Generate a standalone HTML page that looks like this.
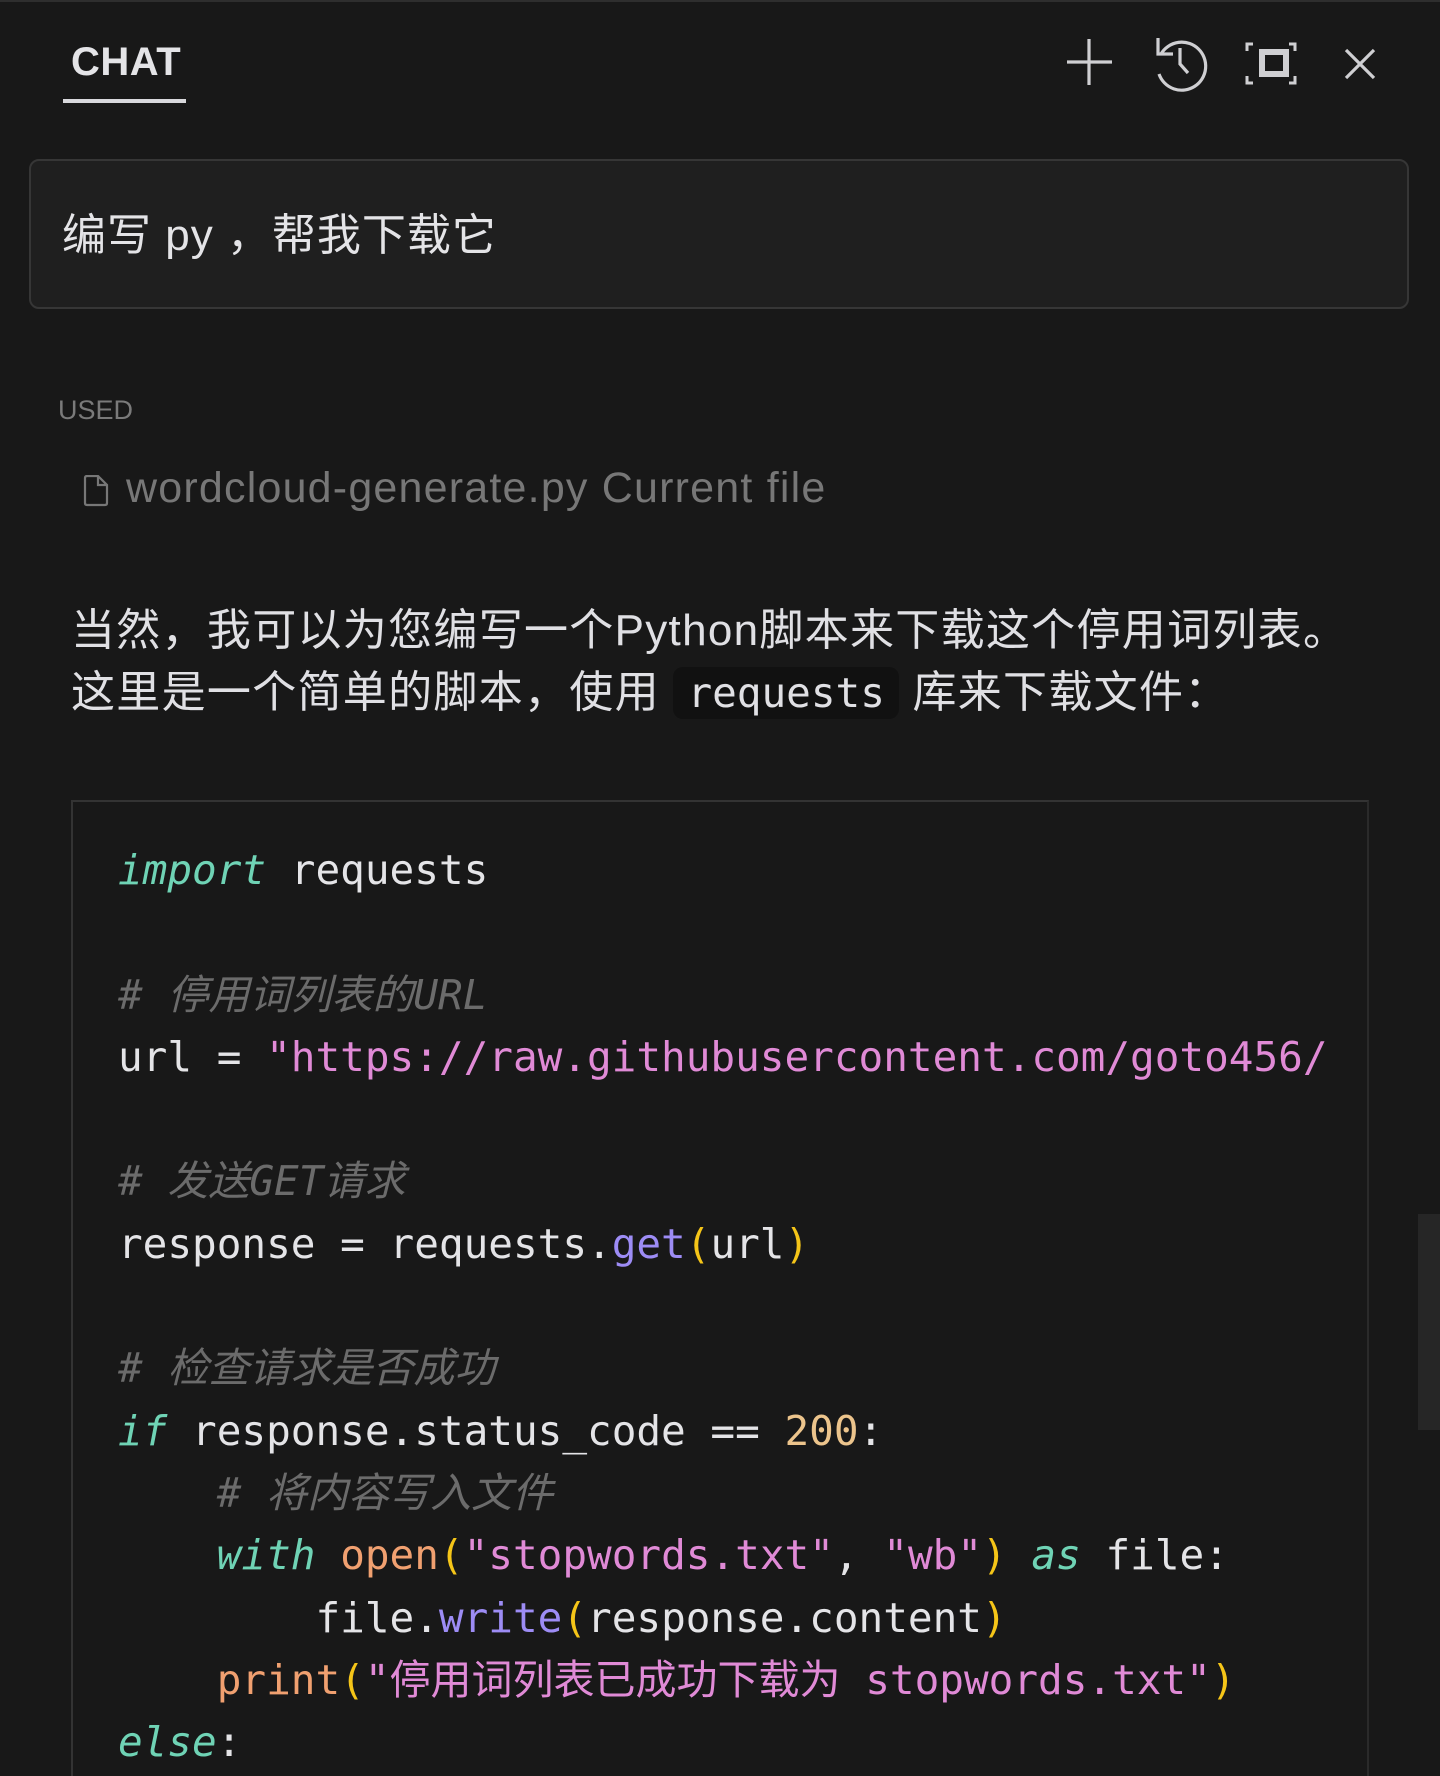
<!DOCTYPE html>
<html><head><meta charset="utf-8"><style>
*{margin:0;padding:0;box-sizing:border-box}
html,body{width:1440px;height:1776px;background:#181818;overflow:hidden}
body{position:relative;font-family:"Liberation Sans","Noto Sans CJK SC",sans-serif;color:#d4d4d8;border-top:2px solid #2e2e2e}
.abs{position:absolute}
.tab{left:71px;top:38px;font-size:40px;font-weight:bold;color:#e4e4e7;letter-spacing:0.5px}
.uline{left:63px;top:97px;width:123px;height:4px;background:#d8d8dc}
.input{left:29px;top:157px;width:1380px;height:150px;border:2px solid #363636;border-radius:10px;background:#1f1f1f}
.input span{position:absolute;left:31px;top:38px;font-size:44px;color:#e4e4e7;letter-spacing:1px}
.used{left:58px;top:393px;font-size:27px;color:#7a7a7a}
.file{left:126px;top:462px;font-size:43px;color:#777;letter-spacing:1.2px}
.para{left:71px;top:598px;font-size:44px;line-height:62px;color:#e0e0e4;white-space:nowrap;letter-spacing:1.3px}
.ic{background:#111;border-radius:10px;padding:2px 14px;font-family:"DejaVu Sans Mono","Liberation Mono",monospace;font-size:41px;letter-spacing:0}
.code{left:71px;top:798px;width:1298px;height:1000px;border:2px solid #333;border-right-color:#2a2a2a}
pre{position:absolute;left:45px;top:37px;font-family:"DejaVu Sans Mono","Liberation Mono","Noto Sans CJK SC",monospace;font-size:41px;line-height:62.3px;color:#e4e4e7;white-space:pre;width:1210px;overflow:hidden}
.k{color:#6fd3b5;font-style:italic}
.c{color:#6b6b6b;font-style:italic}
.s{color:#e08ad6}
.f{color:#9d8cf5}
.p{color:#f5c518}
.o{color:#f0a070}
.n{color:#ecc48c}
.sb{left:1418px;top:1212px;width:22px;height:216px;background:#262626}
</style></head><body>
<div class="abs tab">CHAT</div>
<div class="abs uline"></div>
<svg class="abs" style="left:1060px;top:30px" width="330" height="62" viewBox="1060 30 330 62" fill="none" stroke="#cfcfd2" stroke-width="3.2">
<path d="M1089 37V83M1067 60H1112"/>
<path d="M1161 52A24 24 0 1 1 1159 72" />
<path d="M1158 36V52H1173"/>
<path d="M1180 46V62L1188 71"/>
<path d="M1253 42H1247V49M1289 42H1295V49M1247 74V81H1253M1295 74V81H1289" stroke-width="3"/>
<rect x="1262" y="50" width="24" height="22" stroke-width="6"/>
<path d="M1346 48L1374 76M1374 48L1346 76"/>
</svg>
<div class="abs input"><span>编写 py ，帮我下载它</span></div>
<div class="abs used">USED</div>
<svg class="abs" style="left:83px;top:473px" width="28" height="32" viewBox="0 0 28 32" fill="none" stroke="#777" stroke-width="2.2"><path d="M2 3Q2 1 4 1H15L24 10V28Q24 30 22 30H4Q2 30 2 28Z M15 1V10H24"/></svg>
<div class="abs file">wordcloud-generate.py Current file</div>
<div class="abs para">当然，我可以为您编写一个Python脚本来下载这个停用词列表。<br>这里是一个简单的脚本，使用 <span class="ic">requests</span> 库来下载文件：</div>
<div class="abs code"><pre><span class="k">import</span> requests

<span class="c"># 停用词列表的URL</span>
url = <span class="s">"https://raw.githubusercontent.com/goto456/stopwords/master/cn_stopwords.txt"</span>

<span class="c"># 发送GET请求</span>
response = requests.<span class="f">get</span><span class="p">(</span>url<span class="p">)</span>

<span class="c"># 检查请求是否成功</span>
<span class="k">if</span> response.status_code == <span class="n">200</span>:
    <span class="c"># 将内容写入文件</span>
    <span class="k">with</span> <span class="o">open</span><span class="p">(</span><span class="s">"stopwords.txt"</span>, <span class="s">"wb"</span><span class="p">)</span> <span class="k">as</span> file:
        file.<span class="f">write</span><span class="p">(</span>response.content<span class="p">)</span>
    <span class="o">print</span><span class="p">(</span><span class="s">"停用词列表已成功下载为 stopwords.txt"</span><span class="p">)</span>
<span class="k">else</span>:
    <span class="o">print</span><span class="p">(</span><span class="s">"下载失败"</span><span class="p">)</span></pre></div>
<div class="abs sb"></div>
</body></html>
